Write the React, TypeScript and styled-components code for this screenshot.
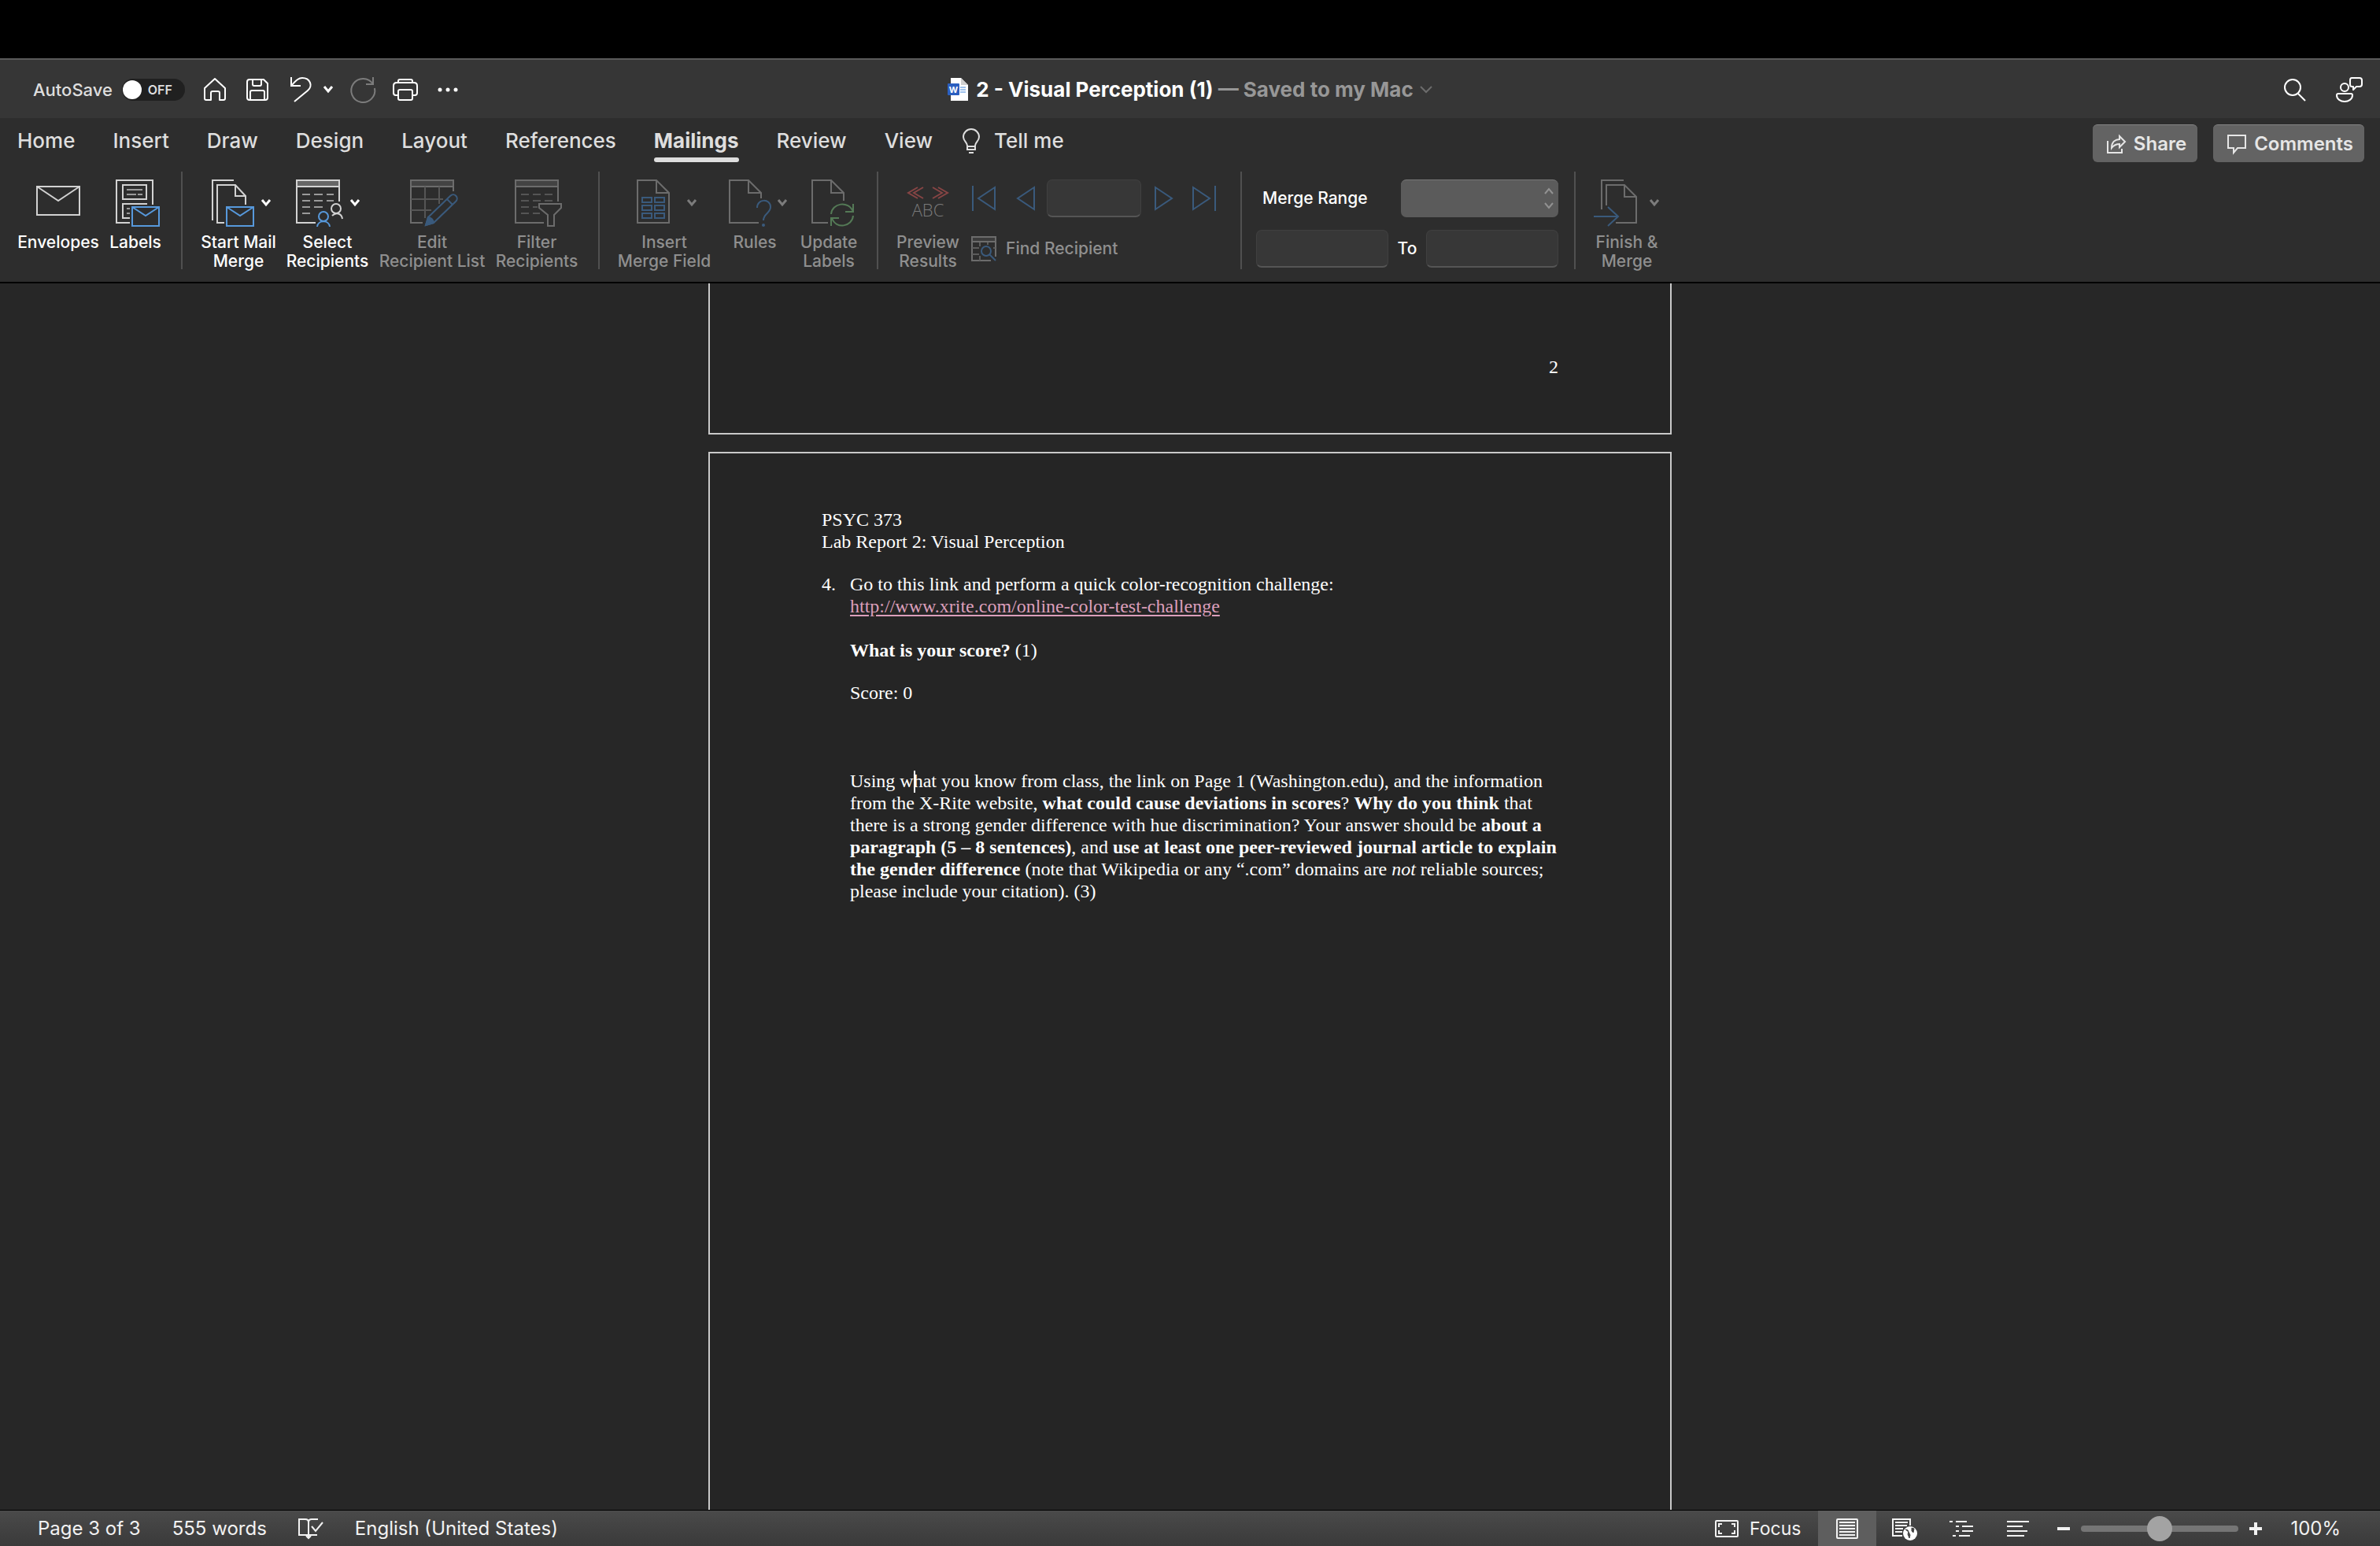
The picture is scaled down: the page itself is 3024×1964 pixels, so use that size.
import React, { useState } from "react";
import styled, { createGlobalStyle, css } from "styled-components";

const color = {
  titleBar: "#363636",
  ribbon: "#2d2d2d",
  canvas: "#272727",
  page: "#252525",
  pageEdge: "#c9c9c9",
  text: "#dedede",
  bright: "#ffffff",
  dim: "#8f8f8f",
  rule: "#505050",
  icon: "#d2d2d2",
  iconDim: "#6c6c6c",
  blue: "#5799dc",
  blueDim: "#3a5a7c",
  green: "#547a56",
  red: "#874545",
  button: "#636363",
  link: "#dc9fbb",
};

const GlobalStyle = createGlobalStyle`
  * { box-sizing: border-box; }
  html, body, #root { height: 100%; }
  body { margin: 0; background: #000; }
  button, input, select { font: inherit; color: inherit; margin: 0; }
`;

const Shell = styled.div`
  display: flex;
  flex-direction: column;
  height: 100vh;
  padding-top: 74px;
  background: #000;
  color: ${color.text};
  font-family: Inter, "Liberation Sans", sans-serif;
  font-size: 21px;
  line-height: 24px;
`;

const plainButton = css`
  display: inline-flex;
  align-items: center;
  justify-content: center;
  padding: 0;
  border: 0;
  background: none;
`;

/* ---------- title bar ---------- */

const TitleBar = styled.header`
  display: grid;
  grid-template-columns: 1fr auto 1fr;
  align-items: center;
  flex: none;
  height: 76px;
  padding-top: 2px;
  border-top: 2px solid #5a5a5a;
  background: ${color.titleBar};
`;

const QuickAccess = styled.div`
  display: flex;
  align-items: center;
  gap: 22px;
  padding-left: 42px;
`;

const AutoSave = styled.label`
  display: flex;
  align-items: center;
  gap: 12px;
  font-size: 22px;
  font-weight: 500;
`;

const Switch = styled.span`
  position: relative;
  display: flex;
  align-items: center;
  justify-content: flex-end;
  width: 80px;
  height: 28px;
  padding-right: 16px;
  border-radius: 14px;
  background: #202020;
  font-size: 16px;
  font-weight: 600;
`;

const SwitchInput = styled.input`
  appearance: none;
  position: absolute;
  left: 1px;
  top: 2px;
  width: 24px;
  height: 24px;
  border-radius: 12px;
  background: #fff;
`;

const IconButton = styled.button<{ $width?: number; $dim?: boolean }>`
  ${plainButton}
  width: ${(p) => p.$width ?? 32}px;
  height: 32px;
  color: ${(p) => (p.$dim ? "#7c7c7c" : "#fff")};
`;

const UndoGroup = styled.span`
  display: flex;
  align-items: center;
  gap: 14px;
`;

const DocumentTitle = styled.h1`
  display: flex;
  align-items: center;
  gap: 8px;
  margin: 0;
  color: ${color.bright};
  font-size: 26px;
  font-weight: 700;
  line-height: 32px;
`;

const SavedState = styled.span`
  color: #979797;
`;

const TitleActions = styled.div`
  display: flex;
  justify-content: flex-end;
  gap: 36px;
  padding-right: 22px;
`;

/* ---------- ribbon ---------- */

const Ribbon = styled.div`
  flex: none;
  border-bottom: 2px solid #000;
  background: ${color.ribbon};
`;

const TabRow = styled.nav`
  display: flex;
  align-items: flex-start;
  height: 56px;
  padding: 0 20px 0 22px;
`;

const Tabs = styled.div`
  display: flex;
  gap: 48px;
  font-size: 26px;
  font-weight: 500;
  line-height: 32px;
`;

const Tab = styled.button<{ $active?: boolean }>`
  ${plainButton}
  position: relative;
  height: 56px;
  padding-top: 2px;
  font-weight: ${(p) => (p.$active ? 700 : 500)};
  ${(p) =>
    p.$active &&
    css`
      &::after {
        content: "";
        position: absolute;
        inset: auto 0 0 0;
        height: 6px;
        border-radius: 3px;
        background: ${color.text};
      }
    `}
`;

const TellMe = styled(Tab)`
  gap: 18px;
  margin-left: -10px;
`;

const TabActions = styled.div`
  display: flex;
  gap: 20px;
  margin: 8px 0 0 auto;
`;

const PillButton = styled.button`
  ${plainButton}
  gap: 10px;
  height: 48px;
  padding: 0 14px 0 18px;
  border-top: 1px solid #858585;
  border-radius: 6px;
  background: ${color.button};
  color: #e6e6e6;
  font-size: 24px;
  font-weight: 600;
`;

const ToolRow = styled.div`
  display: flex;
  padding: 12px 0 16px 2px;
`;

const Group = styled.div`
  display: flex;
  align-items: flex-start;
  height: 124px;
  padding: 10px 18px 0;
  border-right: 2px solid ${color.rule};
  &:last-child {
    border-right: 0;
  }
`;

const FirstGroup = styled(Group)`
  padding-right: 12px;
  padding-left: 20px;
`;

const Tool = styled.button<{ $width: number }>`
  ${plainButton}
  flex-direction: column;
  gap: 8px;
  width: ${(p) => p.$width}px;
  color: ${color.bright};
  font-weight: 500;
  line-height: 24px;
  &:disabled {
    color: ${color.dim};
  }
`;

const ToolIcon = styled.span`
  display: flex;
  align-items: center;
  gap: 6px;
  height: 60px;
`;

const ToolLabel = styled.span`
  white-space: pre;
`;

const PreviewGlyph = styled.span`
  display: flex;
  flex-direction: column;
  align-items: center;
  gap: 2px;
  width: 64px;
  color: #7a7a7a;
  font-family: "Open Sans", sans-serif;
  font-size: 22px;
  font-weight: 300;
`;

const Navigator = styled.div`
  display: flex;
  flex-direction: column;
  gap: 16px;
  padding: 0 12px 0 10px;
`;

const NavRow = styled.div`
  display: flex;
  align-items: center;
  gap: 16px;
  height: 48px;
`;

const NavButton = styled.button`
  ${plainButton}
  height: 32px;
`;

const StepPair = styled.div`
  display: flex;
  gap: 24px;
`;

const FieldBox = styled.input<{ $width: number }>`
  width: ${(p) => p.$width}px;
  height: 48px;
  padding: 0 10px;
  border: 1px solid #404040;
  border-bottom: 2px solid #555;
  border-radius: 7px;
  background: #373737;
`;

const FindButton = styled.button`
  ${plainButton}
  align-self: flex-start;
  gap: 12px;
  height: 48px;
  color: ${color.dim};
  font-weight: 500;
`;

const RangeForm = styled.div`
  display: flex;
  flex-direction: column;
  gap: 16px;
  width: 384px;
  margin-right: 2px;
  color: ${color.bright};
  font-weight: 500;
`;

const RangeRow = styled.div<{ $inset?: boolean }>`
  display: flex;
  align-items: center;
  justify-content: space-between;
  padding-left: ${(p) => (p.$inset ? 8 : 0)}px;
`;

const SelectWrap = styled.span`
  position: relative;
  display: flex;
  width: 200px;
`;

const RangeSelect = styled.select`
  appearance: none;
  width: 100%;
  height: 48px;
  border: 0;
  border-top: 1px solid #787878;
  border-radius: 7px;
  background: #5b5b5b;
  opacity: 1;
`;

const SelectArrows = styled.svg`
  position: absolute;
  right: 5px;
  top: 10px;
  pointer-events: none;
`;

/* ---------- document ---------- */

const Canvas = styled.main`
  display: flex;
  flex: 1;
  flex-direction: column;
  align-items: center;
  gap: 22px;
  min-height: 0;
  overflow: hidden;
  background: ${color.canvas};
  color: #fff;
  font-family: "Liberation Serif", serif;
  font-size: 24px;
  line-height: 28px;
`;

const Page = styled.section`
  width: 1224px;
  padding: 70px 142px;
  border: 2px solid ${color.pageEdge};
  background: ${color.page};
`;

const PageTail = styled(Page)`
  flex: none;
  height: 192px;
  padding: 92px 142px 0;
  border-top: 0;
  text-align: right;
`;

const PageBody = styled(Page)`
  flex: 1;
  border-bottom: 0;
`;

const PageHeader = styled.header`
  margin-bottom: 26px;
`;

const Questions = styled.ol`
  margin: 0;
  padding-left: 36px;
`;

const Question = styled.li`
  list-style: none;
`;

const Prompt = styled.div`
  display: flex;
  margin-left: -36px;
`;

const Marker = styled.span`
  width: 36px;
`;

const Para = styled.p<{ $gap: number }>`
  margin: ${(p) => p.$gap}px 0 0;
  white-space: nowrap;
`;

const DocLink = styled.a`
  color: ${color.link};
  text-decoration-thickness: 2px;
  text-underline-offset: 3px;
`;

const Caret = styled.span`
  position: relative;
  &::after {
    content: "";
    position: absolute;
    left: 0;
    top: 0;
    width: 2px;
    height: 28px;
    background: #fff;
  }
`;

/* ---------- status bar ---------- */

const StatusBar = styled.footer`
  display: flex;
  flex: none;
  align-items: center;
  justify-content: space-between;
  height: 46px;
  padding: 0 50px 0 48px;
  border-top: 1px solid #000;
  background: linear-gradient(#4a4a4a, #3a3a3a);
  color: #f2f2f2;
  font-size: 24px;
  line-height: 32px;
`;

const StatusGroup = styled.div`
  display: flex;
  align-items: center;
  height: 100%;
`;

const StatusInfo = styled(StatusGroup)`
  gap: 40px;
`;

const StatusButton = styled.button`
  ${plainButton}
  gap: 14px;
`;

const FocusButton = styled(StatusButton)`
  margin-right: 22px;
  font-size: 23px;
`;

const ViewButton = styled.button<{ $active?: boolean }>`
  ${plainButton}
  width: ${(p) => (p.$active ? 74 : 72)}px;
  height: 100%;
  background: ${(p) => (p.$active ? "#5e5e5e" : "none")};
`;

const Zoom = styled.div`
  display: flex;
  align-items: center;
  gap: 14px;
  margin: 0 36px 0 14px;
`;

const Slider = styled.input`
  appearance: none;
  width: 200px;
  height: 8px;
  border-radius: 4px;
  background: #757575;
  &::-webkit-slider-thumb {
    appearance: none;
    width: 32px;
    height: 32px;
    border-radius: 16px;
    background: #a3a3a3;
  }
`;

/* ---------- icons ---------- */

type SvgProps = { w: number; h: number; stroke?: string; sw?: number; children: React.ReactNode };

const Svg = ({ w, h, stroke = "currentColor", sw = 2, children }: SvgProps) => (
  <svg width={w} height={h} viewBox={`0 0 ${w} ${h}`} fill="none" stroke={stroke} strokeWidth={sw} overflow="visible" aria-hidden="true">
    {children}
  </svg>
);

const Chevron = ({ dim }: { dim?: boolean }) => (
  <Svg w={12} h={12} stroke={dim ? "#7c7c7c" : "#fff"} sw={3}>
    <path d="M1 2l5 6 5-6" />
  </Svg>
);

const SmallEnvelope = () => <path d="M26 35h34v24H26zl17 11 17-11" stroke={color.blue} />;

const EnvelopesIcon = () => (
  <Svg w={64} h={60} stroke={color.icon}>
    <path d="M5 9h54v36H5zM5 9l27 18L59 9" />
  </Svg>
);

const LabelsIcon = () => (
  <Svg w={64} h={60} stroke={color.icon}>
    <path d="M25 55H8V1h46v31M25 49H16V31h31M16 7h30v18H16z" />
    <path d="M21 13h20M21 19h12M35 19h6M21 37h4M21 43h4" stroke="#9a9a9a" />
    <g transform="translate(2 0)"><SmallEnvelope /></g>
  </Svg>
);

const StartMergeIcon = () => (
  <Svg w={64} h={60} stroke={color.icon}>
    <path d="M35 1H8v51M23 55h-9V7h23l13 14v11M37 7v14h13" />
    <SmallEnvelope />
  </Svg>
);

const SelectIcon = () => (
  <Svg w={64} h={60} stroke={color.icon}>
    <path d="M2 1h54v8H2z" fill="#666" />
    <path d="M26 55H2V1h54v27" />
    <path d="M9 19h10M24 19h11M40 19h9M9 27h10M24 27h11M40 27h9M9 35h10M24 35h11M9 43h10" stroke="#9a9a9a" />
    <circle cx="52" cy="37" r="6" />
    <path d="M47 46c5-5 12-3 13 4" />
    <g stroke={color.blue}>
      <circle cx="36" cy="47" r="6" />
      <path d="M28 60c1-9 15-9 16 0" />
    </g>
  </Svg>
);

const EditIcon = () => (
  <Svg w={64} h={60} stroke={color.iconDim}>
    <path d="M5 1h54v8H5z" fill="#434343" />
    <path d="M20 55H5V1h54v14" />
    <path d="M23 9v40M41 9v22M5 25h41M5 39h26" stroke="#555" />
    <g stroke={color.blueDim}>
      <path d="M24 58l3-10 28-27c5-5 12 2 7 7L34 55z" fill={color.ribbon} />
      <path d="M24 58l3-10q6 1 7 7z" fill={color.blueDim} />
      <path d="M51 25l7 7" />
    </g>
  </Svg>
);

const FilterIcon = () => (
  <Svg w={64} h={60} stroke={color.iconDim}>
    <path d="M5 1h54v8H5z" fill="#434343" />
    <path d="M41 55H5V1h54v27" />
    <path d="M12 19h10M27 19h10M42 19h10M12 27h10M27 27h10M42 27h10M12 35h10M27 35h6M12 43h10M27 43h9" stroke="#555" />
    <path d="M35 31h28v5l-9 9v14h-8V45l-11-9z" />
  </Svg>
);

const InsertFieldIcon = () => (
  <Svg w={64} h={60} stroke={color.iconDim}>
    <path d="M7 1h24l16 16v38H7zM31 1v16h16" />
    <path d="M13 23h12v6H13zM29 23h12v6H29zM13 33h12v6H13zM29 33h12v6H29zM13 43h12v6H13zM29 43h12v6H29z" stroke={color.blueDim} />
  </Svg>
);

const RulesIcon = () => (
  <Svg w={64} h={60} stroke={color.iconDim}>
    <path d="M46 55H9V1h24l16 16v7M33 1v16h16" />
    <path d="M44 36c0-12 17-12 17-1 0 8-9 8-9 17" stroke={color.blueDim} />
    <circle cx="52" cy="58" r="2" fill={color.blueDim} stroke="none" />
  </Svg>
);

const UpdateIcon = () => (
  <Svg w={64} h={60} stroke={color.iconDim}>
    <path d="M31 55H11V1h24l16 16v10M35 1v16h16" />
    <path d="M35 44c1-14 22-18 28-3M63 31v10H53M63 46c-1 14-22 18-27 3M35 59V49h10" stroke={color.green} />
  </Svg>
);

const FinishIcon = () => (
  <Svg w={64} h={60} stroke={color.iconDim}>
    <path d="M37 1H9v37M15 33V7h23l15 15v33H27M38 7v15h15" />
    <path d="M-1 47h31M17 35l13 12-13 12" stroke={color.blueDim} />
  </Svg>
);

const PreviewIcon = () => (
  <PreviewGlyph>
    <Svg w={64} h={14} stroke={color.red}>
      <path d="M19 0L7 7l12 7M26 0L14 7l12 7M38 0l12 7-12 7M45 0l12 7-12 7" />
    </Svg>
    ABC
  </PreviewGlyph>
);

const FindIcon = () => (
  <Svg w={32} h={32} stroke={color.iconDim}>
    <path d="M1 1h30v6H1z" fill="#3c3c3c" />
    <path d="M25 31H1V7M31 7v19" />
    <path d="M1 15h9M1 23h9M11 8v5M11 25v6M21 8v3M28 15h3" stroke="#5c5c5c" />
    <circle cx="19" cy="19" r="6" stroke={color.blueDim} />
    <path d="M23 23l8 8" stroke={color.blueDim} />
  </Svg>
);

const HomeIcon = () => (
  <Svg w={32} h={32}>
    <path d="M3 14L16 2l13 12v13q0 2-2 2h-5V20q0-2-2-2h-7q-2 0-2 2v9H5q-2 0-2-2z" strokeLinejoin="round" />
  </Svg>
);

const SaveIcon = () => (
  <Svg w={32} h={32}>
    <path d="M6 3h18l5 5v18q0 3-3 3H6q-3 0-3-3V6q0-3 3-3zM10 3v6q0 2 2 2h7q2 0 2-2V3M7 29V19q0-2 2-2h14q2 0 2 2v10" />
  </Svg>
);

const UndoIcon = () => (
  <Svg w={32} h={32}>
    <path d="M5 0v11h12M5 11C12 3 15 1 19 1c10 0 14 10 7 16L9 31" />
  </Svg>
);

const RedoIcon = () => (
  <Svg w={32} h={32}>
    <path d="M29 0v9h-9M29 9A15 15 0 1 0 31 14" />
  </Svg>
);

const PrintIcon = () => (
  <Svg w={32} h={32}>
    <path d="M7 23H4q-3 0-3-3v-9q0-4 4-4h22q4 0 4 4v9q0 3-3 3h-3M7 7V5q0-2 2-2h14q2 0 2 2v2M9 16h14q2 0 2 2v9q0 2-2 2H9q-2 0-2-2v-9q0-2 2-2z" />
  </Svg>
);

const MoreIcon = () => (
  <Svg w={32} h={32}>
    <g fill="currentColor" stroke="none">
      <circle cx="6" cy="16" r="2.5" />
      <circle cx="16" cy="16" r="2.5" />
      <circle cx="26" cy="16" r="2.5" />
    </g>
  </Svg>
);

const WordIcon = () => (
  <Svg w={28} h={30}>
    <g stroke="none">
      <path d="M4 0h13l9 9v20H4z" fill="#fff" />
      <path d="M17 0l9 9h-9z" fill="#cfcfcf" />
      <rect x="0" y="7" width="15" height="15" rx="1" fill="#2b5fc0" />
      <text x="7.5" y="18.500" fill="#fff" fontSize="11" fontWeight="700" textAnchor="middle">W</text>
    </g>
    <path d="M16 12h7M16 15h7M16 18h7" stroke="#3f86dc" strokeWidth="1" />
  </Svg>
);

const SearchIcon = () => (
  <Svg w={32} h={32}>
    <circle cx="13" cy="13" r="10" />
    <path d="M20 21l9 9" />
  </Svg>
);

const PresenceIcon = () => (
  <Svg w={34} h={32}>
    <circle cx="11" cy="13" r="5" />
    <path d="M3 21h16q2 0 2 2c0 5-5 8-10 8S1 28 1 23q0-2 2-2z" />
    <path d="M20 1h10q3 0 3 3v5q0 3-3 3h-4l-4 4v-4h-2q-2 0-2-3V4q0-3 2-3z" strokeLinejoin="round" />
  </Svg>
);

const BulbIcon = () => (
  <Svg w={22} h={32}>
    <path d="M6 27v-5c0-4-5-6-5-11a10 10 0 0 1 20 0c0 5-5 7-5 11v5zM6 23h10M8 31h6" />
  </Svg>
);

const ShareIcon = () => (
  <Svg w={24} h={24}>
    <path d="M1 8v15h18v-5" />
    <path d="M6 17C6 9 11 6 16 6V2l7 7-7 7v-4c-4 0-7 1-10 5z" />
  </Svg>
);

const CommentIcon = () => (
  <Svg w={24} h={24}>
    <path d="M1 1h22v16H13l-5 6v-6H1z" />
  </Svg>
);

const ProofIcon = () => (
  <Svg w={32} h={28}>
    <path d="M13 22H1V2h8q4 0 4 4v20M13 6q0-4 4-4h8M13 22h11M10 23l3 3 3-3" />
    <path d="M17 11l5 6 9-11" />
  </Svg>
);

const FocusIcon = () => (
  <Svg w={30} h={22}>
    <rect x="1" y="1" width="28" height="20" rx="1" />
    <path d="M5 9V5h4M21 5h4v4M25 13v4h-4M9 17H5v-4" />
  </Svg>
);

const PrintLayoutIcon = () => (
  <Svg w={28} h={28}>
    <rect x="1" y="2" width="26" height="24" rx="1" />
    <path d="M4 6h20M4 10h20M4 14h20M4 18h20M4 22h20" />
  </Svg>
);

const WebLayoutIcon = () => (
  <Svg w={32} h={30}>
    <path d="M13 24H1V3h22v8M4 7h16M4 11h15M4 15h10M4 19h9" />
    <circle cx="23" cy="21" r="9" fill="#fff" stroke="none" />
    <path d="M17 16q4 0 4 3l-1 3 2 5 1-4-2-4zM25 14l3 1-1 5-2-2z" fill="#444" stroke="#444" strokeWidth="1" />
  </Svg>
);

const OutlineIcon = () => (
  <Svg w={30} h={24}>
    <path d="M0 3h4M8 3h14M8 9h4M16 9h14M8 15h4M16 15h14M4 21h4M12 21h14" />
  </Svg>
);

const DraftIcon = () => (
  <Svg w={28} h={24}>
    <path d="M0 3h28M0 9h20M0 15h26M0 21h22" />
  </Svg>
);

/* ---------- page ---------- */

type ToolDef = { label: string; width: number; icon: React.ReactNode; menu?: boolean; off?: boolean };

const createTools: ToolDef[] = [
  { label: "Envelopes\n ", width: 104, icon: <EnvelopesIcon /> },
  { label: "Labels\n ", width: 92, icon: <LabelsIcon /> },
];

const startTools: ToolDef[] = [
  { label: "Start Mail\nMerge", width: 106, icon: <StartMergeIcon />, menu: true },
  { label: "Select\nRecipients", width: 120, icon: <SelectIcon />, menu: true },
  { label: "Edit\nRecipient List", width: 146, icon: <EditIcon />, off: true },
  { label: "Filter\nRecipients", width: 120, icon: <FilterIcon />, off: true },
];

const fieldTools: ToolDef[] = [
  { label: "Insert\nMerge Field", width: 128, icon: <InsertFieldIcon />, menu: true, off: true },
  { label: "Rules\n ", width: 102, icon: <RulesIcon />, menu: true, off: true },
  { label: "Update\nLabels", width: 86, icon: <UpdateIcon />, off: true },
];

const previewTools: ToolDef[] = [{ label: "Preview\nResults", width: 90, icon: <PreviewIcon />, off: true }];

const finishTools: ToolDef[] = [{ label: "Finish &\nMerge", width: 94, icon: <FinishIcon />, menu: true, off: true }];

const ToolList = ({ tools }: { tools: ToolDef[] }) => (
  <>
    {tools.map((t) => (
      <Tool key={t.label} $width={t.width} disabled={t.off}>
        <ToolIcon>
          {t.icon}
          {t.menu && <Chevron dim={t.off} />}
        </ToolIcon>
        <ToolLabel>{t.label}</ToolLabel>
      </Tool>
    ))}
  </>
);

const tabs = ["Home", "Insert", "Draw", "Design", "Layout", "References", "Mailings", "Review", "View"];

export default function App() {
  const [active, setActive] = useState("Mailings");
  const [zoom, setZoom] = useState(50);

  return (
    <Shell>
      <GlobalStyle />
      <TitleBar>
        <QuickAccess>
          <AutoSave>
            AutoSave
            <Switch>
              <SwitchInput type="checkbox" role="switch" />
              OFF
            </Switch>
          </AutoSave>
          <IconButton aria-label="Home"><HomeIcon /></IconButton>
          <IconButton aria-label="Save"><SaveIcon /></IconButton>
          <UndoGroup>
            <IconButton aria-label="Undo"><UndoIcon /></IconButton>
            <IconButton aria-label="Undo history" $width={12}><Chevron /></IconButton>
          </UndoGroup>
          <IconButton aria-label="Redo" $dim><RedoIcon /></IconButton>
          <IconButton aria-label="Print"><PrintIcon /></IconButton>
          <IconButton aria-label="More"><MoreIcon /></IconButton>
        </QuickAccess>
        <DocumentTitle>
          <WordIcon />
          <span>
            2 - Visual Perception (1) <SavedState>— Saved to my Mac</SavedState>
          </span>
          <Svg w={16} h={10} stroke="#6c6c6c">
            <path d="M1 1l7 7 7-7" />
          </Svg>
        </DocumentTitle>
        <TitleActions>
          <IconButton aria-label="Search"><SearchIcon /></IconButton>
          <IconButton aria-label="Presence" $width={34}><PresenceIcon /></IconButton>
        </TitleActions>
      </TitleBar>

      <Ribbon>
        <TabRow>
          <Tabs>
            {tabs.map((t) => (
              <Tab key={t} $active={t === active} onClick={() => setActive(t)}>{t}</Tab>
            ))}
            <TellMe><BulbIcon />Tell me</TellMe>
          </Tabs>
          <TabActions>
            <PillButton><ShareIcon />Share</PillButton>
            <PillButton><CommentIcon />Comments</PillButton>
          </TabActions>
        </TabRow>
        <ToolRow>
          <FirstGroup><ToolList tools={createTools} /></FirstGroup>
          <Group><ToolList tools={startTools} /></Group>
          <Group><ToolList tools={fieldTools} /></Group>
          <Group>
            <ToolList tools={previewTools} />
            <Navigator>
              <NavRow>
                <StepPair>
                  <NavButton aria-label="First record" disabled>
                    <Svg w={32} h={32} stroke={color.blueDim}><path d="M2 0v32M30 2v28L9 16z" /></Svg>
                  </NavButton>
                  <NavButton aria-label="Previous record" disabled>
                    <Svg w={24} h={32} stroke={color.blueDim}><path d="M24 2v28L3 16z" /></Svg>
                  </NavButton>
                </StepPair>
                <FieldBox $width={120} aria-label="Record number" disabled />
                <StepPair>
                  <NavButton aria-label="Next record" disabled>
                    <Svg w={24} h={32} stroke={color.blueDim}><path d="M2 2v28l21-14z" /></Svg>
                  </NavButton>
                  <NavButton aria-label="Last record" disabled>
                    <Svg w={32} h={32} stroke={color.blueDim}><path d="M30 0v32M2 2v28l21-14z" /></Svg>
                  </NavButton>
                </StepPair>
              </NavRow>
              <FindButton disabled><FindIcon />Find Recipient</FindButton>
            </Navigator>
          </Group>
          <Group>
            <RangeForm>
              <RangeRow $inset>
                <label htmlFor="range">Merge Range</label>
                <SelectWrap>
                  <RangeSelect id="range" disabled />
                  <SelectArrows width="14" height="28" viewBox="0 0 14 28" fill="none" stroke="#929292" strokeWidth="2">
                    <path d="M2 8l5-6 5 6M2 20l5 6 5-6" />
                  </SelectArrows>
                </SelectWrap>
              </RangeRow>
              <RangeRow>
                <FieldBox $width={168} aria-label="From record" disabled />
                <label htmlFor="range-to">To</label>
                <FieldBox $width={168} id="range-to" disabled />
              </RangeRow>
            </RangeForm>
          </Group>
          <Group><ToolList tools={finishTools} /></Group>
        </ToolRow>
      </Ribbon>

      <Canvas>
        <PageTail>2</PageTail>
        <PageBody>
          <PageHeader>
            PSYC 373
            <br />
            Lab Report 2: Visual Perception
          </PageHeader>
          <Questions start={4}>
            <Question>
              <Prompt>
                <Marker>4.</Marker>
                Go to this link and perform a quick color-recognition challenge:
              </Prompt>
              <DocLink href="http://www.xrite.com/online-color-test-challenge">
                http://www.xrite.com/online-color-test-challenge
              </DocLink>
              <Para $gap={28}><b>What is your score?</b> (1)</Para>
              <Para $gap={26}>Score: 0</Para>
              <Para $gap={84}>
                Using w<Caret />hat you know from class, the link on Page 1 (Washington.edu), and the information
                <br />
                from the X-Rite website, <b>what could cause deviations in scores</b>? <b>Why do you think</b> that
                <br />
                there is a strong gender difference with hue discrimination? Your answer should be <b>about a</b>
                <br />
                <b>paragraph (5 – 8 sentences)</b>, and <b>use at least one peer-reviewed journal article to explain</b>
                <br />
                <b>the gender difference</b> (note that Wikipedia or any “.com” domains are <i>not</i> reliable sources;
                <br />
                please include your citation). (3)
              </Para>
            </Question>
          </Questions>
        </PageBody>
      </Canvas>

      <StatusBar>
        <StatusInfo>
          <span>Page 3 of 3</span>
          <span>555 words</span>
          <StatusButton aria-label="Proofing"><ProofIcon /></StatusButton>
          <span>English (United States)</span>
        </StatusInfo>
        <StatusGroup>
          <FocusButton><FocusIcon />Focus</FocusButton>
          <ViewButton $active aria-label="Print layout"><PrintLayoutIcon /></ViewButton>
          <ViewButton aria-label="Web layout"><WebLayoutIcon /></ViewButton>
          <ViewButton aria-label="Outline"><OutlineIcon /></ViewButton>
          <ViewButton aria-label="Draft"><DraftIcon /></ViewButton>
          <Zoom>
            <StatusButton aria-label="Zoom out"><Svg w={16} h={16} sw={4}><path d="M0 8h16" /></Svg></StatusButton>
            <Slider type="range" aria-label="Zoom" value={zoom} onChange={(e) => setZoom(+e.target.value)} />
            <StatusButton aria-label="Zoom in"><Svg w={16} h={16} sw={4}><path d="M0 8h16M8 0v16" /></Svg></StatusButton>
          </Zoom>
          <span>100%</span>
        </StatusGroup>
      </StatusBar>
    </Shell>
  );
}
